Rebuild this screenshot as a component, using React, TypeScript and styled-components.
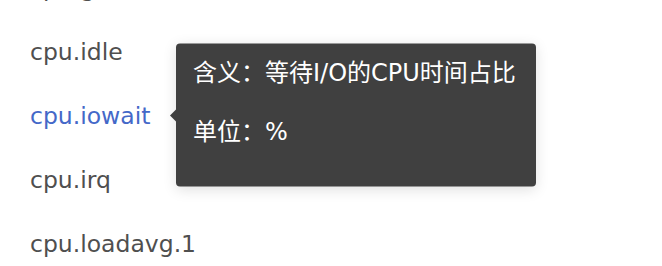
import styled, { createGlobalStyle } from 'styled-components'

const GlobalStyle = createGlobalStyle`
  html, body {
    margin: 0;
    padding: 0;
    background: #ffffff;
  }
`

const Viewport = styled.div`
  width: 662px;
  height: 266px;
  overflow: hidden;
  background: #ffffff;
`

const List = styled.ul`
  list-style: none;
  margin: -44px 0 0 0;
  padding: 0 0 0 30px;
  display: flex;
  flex-direction: column;
`

const Item = styled.li<{ active?: boolean }>`
  position: relative;
  height: 64px;
  display: flex;
  align-items: center;
  font-family: "DejaVu Sans", Verdana, sans-serif;
  font-size: 23.5px;
  color: ${({ active }) => (active ? '#4468c8' : '#4f4f4f')};
`

const Tooltip = styled.div`
  position: absolute;
  left: 146px;
  top: 50%;
  transform: translateY(-50%);
  margin-top: -1px;
  width: 360px;
  height: 143px;
  box-sizing: border-box;
  padding: 11px 17px 0 17px;
  background: #404040;
  border-radius: 4px;
  box-shadow: 0 3px 14px rgba(0, 0, 0, 0.12);
  display: flex;
  flex-direction: column;
  gap: 23px;
  z-index: 2;

  &::before {
    content: '';
    position: absolute;
    left: -6px;
    top: 50%;
    margin-top: -6px;
    border-style: solid;
    border-width: 6px 6px 6px 0;
    border-color: transparent #404040 transparent transparent;
  }
`

const TipLine = styled.div`
  font-family: "DejaVu Sans", "Noto Sans CJK SC", sans-serif;
  font-size: 24px;
  line-height: 36px;
  color: #ffffff;
  white-space: nowrap;
`

const metrics = ['cpu.guest', 'cpu.idle', 'cpu.iowait', 'cpu.irq', 'cpu.loadavg.1']

export default function App() {
  return (
    <Viewport>
      <GlobalStyle />
      <List>
        {metrics.map((name) => (
          <Item key={name} active={name === 'cpu.iowait'}>
            {name}
            {name === 'cpu.iowait' && (
              <Tooltip>
                <TipLine>含义：等待I/O的CPU时间占比</TipLine>
                <TipLine>单位：%</TipLine>
              </Tooltip>
            )}
          </Item>
        ))}
      </List>
    </Viewport>
  )
}
